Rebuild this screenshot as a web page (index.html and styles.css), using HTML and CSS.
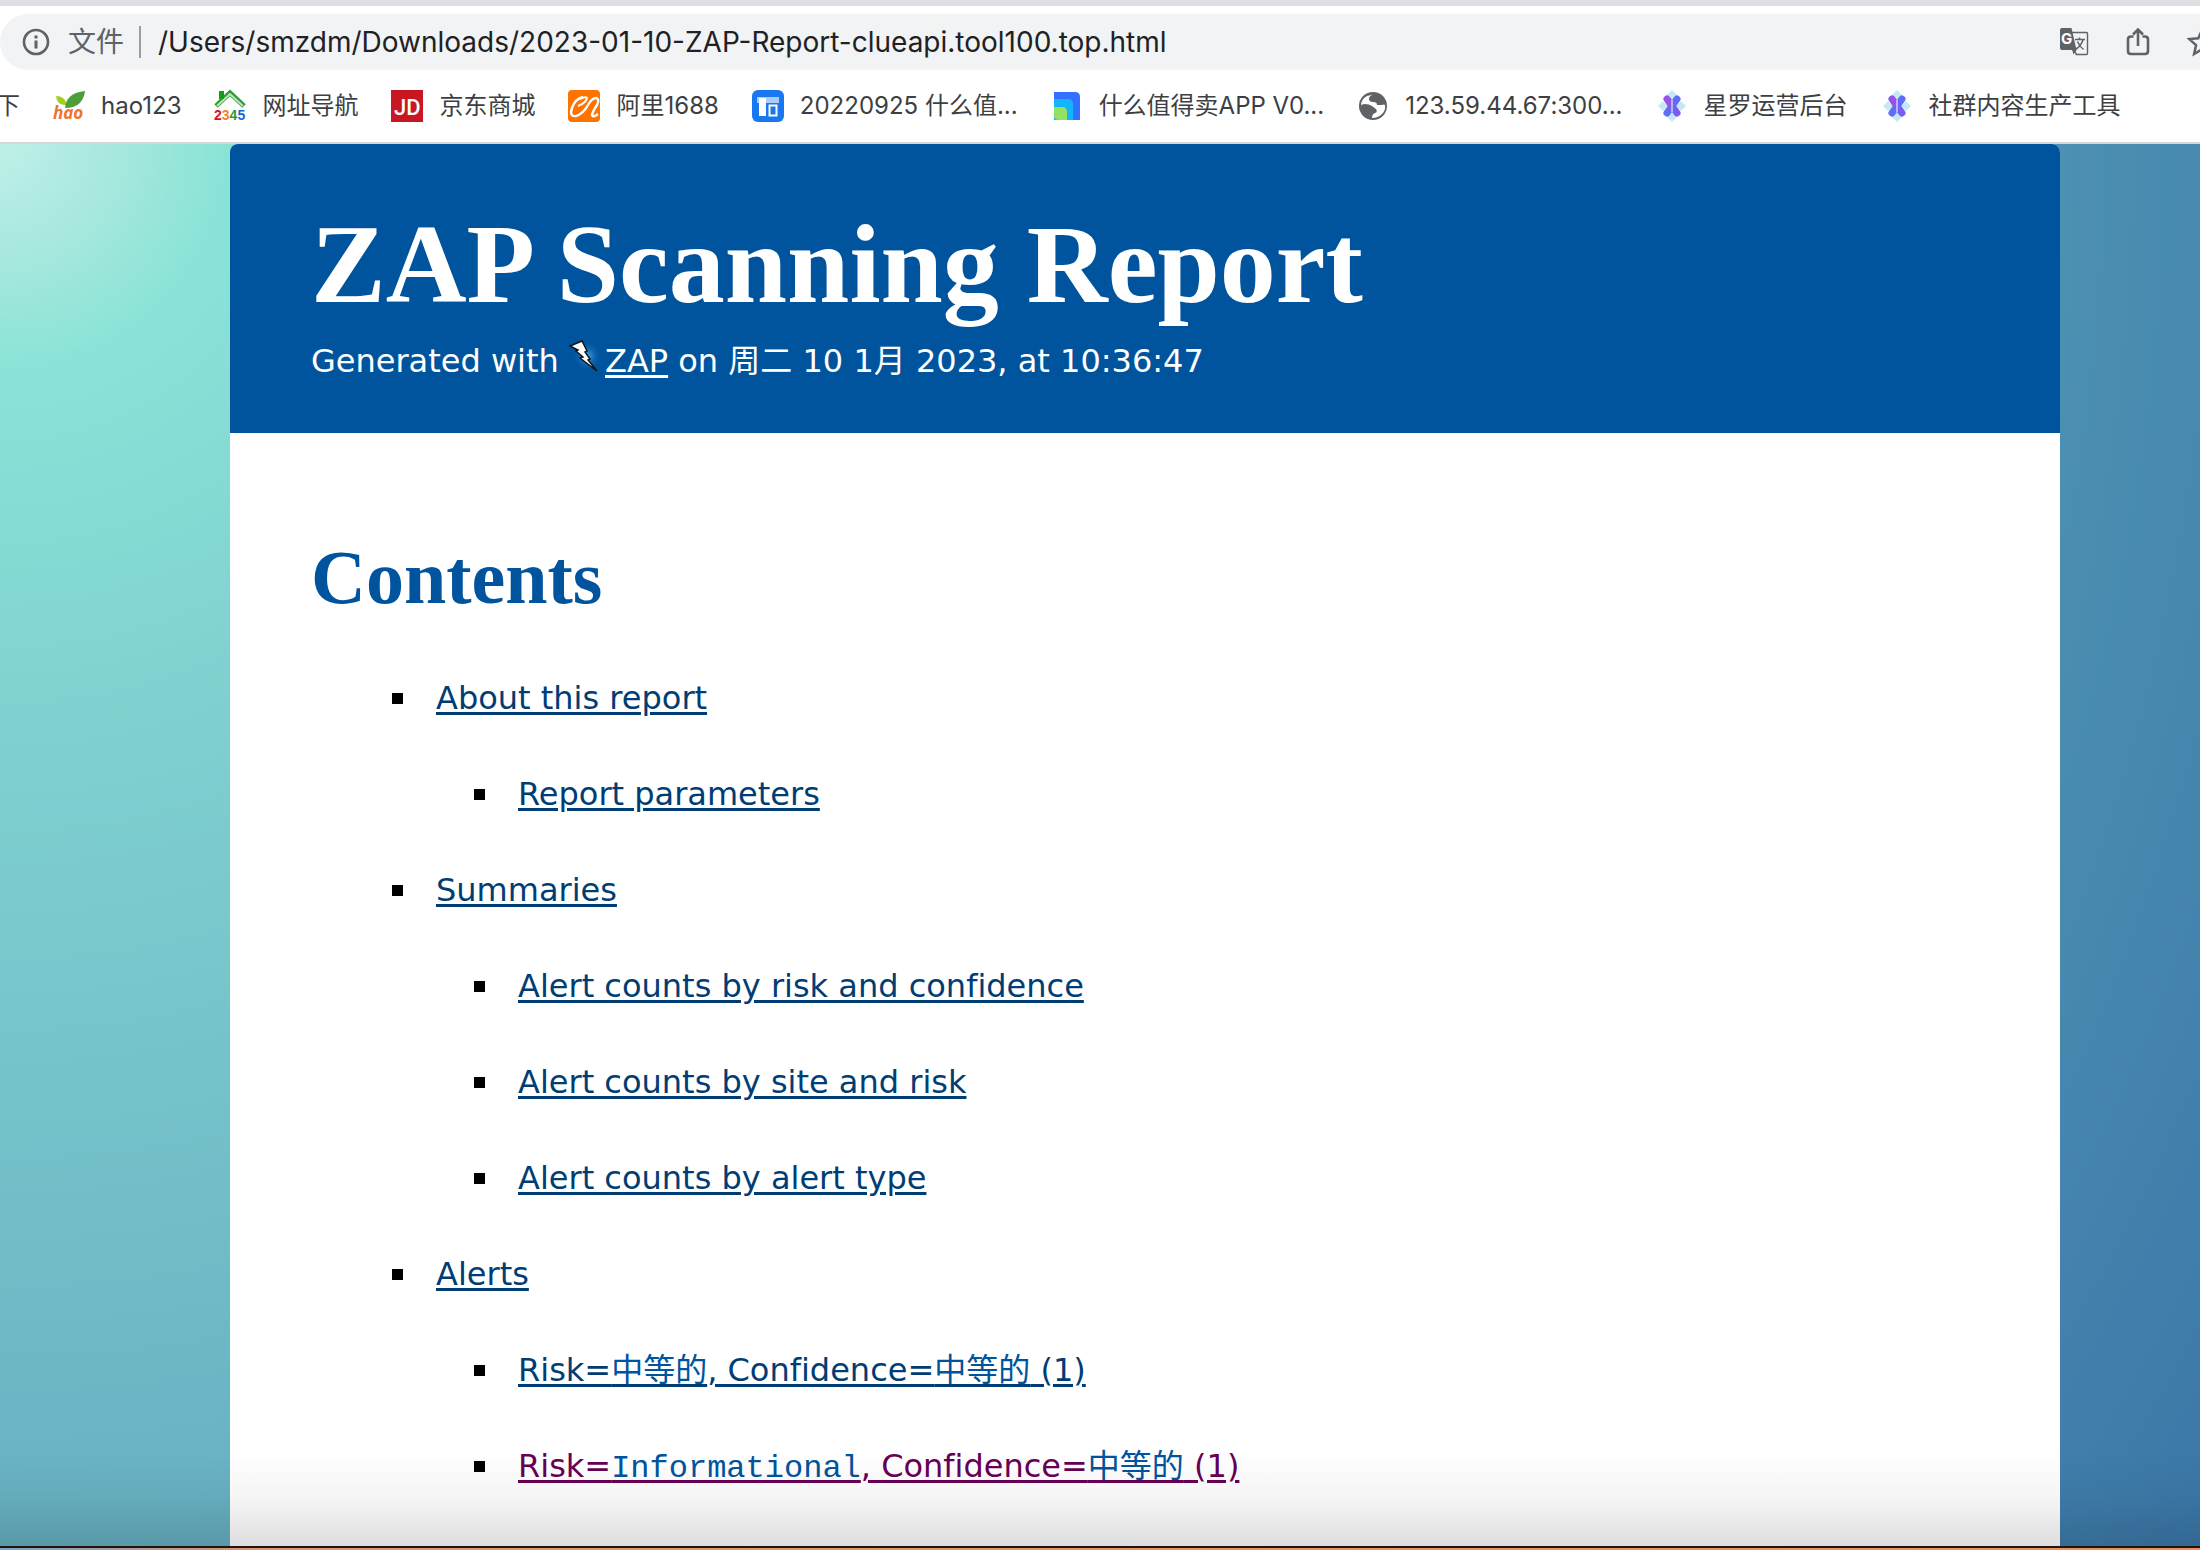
FILE: index.html
```html
<!DOCTYPE html>
<html lang="zh-CN">
<head>
<meta charset="utf-8">
<title>ZAP Scanning Report</title>
<link rel="stylesheet" href="styles.css">
</head>
<body>
<div class="window">
  <header class="chrome">
    <div class="omnibox">
      <svg class="info" viewBox="0 0 28 28" aria-hidden="true"><circle cx="14" cy="14" r="12" fill="none" stroke="#5f6368" stroke-width="2.6"/><path d="M14 12.5v8M14 7.5v3" stroke="#5f6368" stroke-width="3"/></svg>
      <label class="scheme" for="address">文件</label>
      <input class="address" id="address" type="text" value="/Users/smzdm/Downloads/2023-01-10-ZAP-Report-clueapi.tool100.top.html">
      <div class="actions">
        <button class="action" type="button" aria-label="翻译">
          <svg viewBox="0 0 30 30"><path d="M13 5.500h14.500q1 0 1 1v20q0 1-1 1H17.500L14 22" fill="none" stroke="#5f6368" stroke-width="1.400"/><path d="M3 1h9.500l5 22H3q-2 0-2-2V3q0-2 2-2z" fill="#5f6368"/><path d="M13 22.500h5l-3.500 5z" fill="#5f6368"/><text x="2" y="17" class="glyph-g">G</text><path d="M16 12.500h10M20.500 10.500v2M24 13q-2 6-7 9M18.500 14.500q2 5 6 8" fill="none" stroke="#5f6368" stroke-width="1.500"/></svg>
        </button>
        <button class="action" type="button" aria-label="分享">
          <svg viewBox="0 0 30 30"><path d="M10.500 9.500H8q-3 0-3 3V24q0 3 3 3h14q3 0 3-3V12.500q0-3-3-3h-2.500M15 19V3M10 7.500l5-5 5 5" fill="none" stroke="#5f6368" stroke-width="2.600"/></svg>
        </button>
        <button class="action" type="button" aria-label="收藏">
          <svg viewBox="0 0 30 30"><path d="M15 3l3.700 8.300 9 .8-6.800 6 2 8.900-7.900-4.700L7.100 27l2-8.900-6.800-6 9-.8z" fill="none" stroke="#5f6368" stroke-width="2.500"/></svg>
        </button>
      </div>
    </div>
    <nav class="bookmarks" aria-label="书签">
      <a class="bookmark" href="#">下</a>
      <a class="bookmark" href="#">
        <svg viewBox="0 0 32 32"><path d="M3 6q9 0 11 9Q4 16 3 6z" fill="#a4cf1c"/><path d="M12 18Q13 3 32 1 30 18 12 18z" fill="#4c9f38"/><text x="0" y="29" class="glyph-hao" fill="#ee7430">hao</text></svg>
        hao123</a>
      <a class="bookmark" href="#">
        <svg viewBox="0 0 32 32"><path d="M2 16L16 3l14 13" fill="none" stroke="#2f9a3a" stroke-width="5"/><path d="M3 16L16 4l13 12" fill="none" stroke="#bfe6bd" stroke-width="2"/><path d="M5 1h5v8H5z" fill="#159b17"/><text x="0" y="30" class="glyph-2345"><tspan fill="#d8121c">2</tspan><tspan fill="#f58320">3</tspan><tspan fill="#2b9b35">4</tspan><tspan fill="#1467cf">5</tspan></text></svg>
        网址导航</a>
      <a class="bookmark" href="#">
        <svg viewBox="0 0 32 32"><path d="M0 0h32v32H0z" fill="#c81623"/><text x="3" y="25" class="glyph-jd">JD</text></svg>
        京东商城</a>
      <a class="bookmark" href="#">
        <svg viewBox="0 0 32 32"><rect width="32" height="32" rx="4" fill="#ff7300"/><path d="M15 7Q7 9 4 18q-3 9 4 8 7-2 12-11 4-7 8-7 4 1 1 7-4 6-5 10 1 3 6-1" fill="none" stroke="#fff" stroke-width="2.400"/><path d="M12 9q6-3 7-1-1 5-9 8" fill="none" stroke="#fff" stroke-width="2"/></svg>
        阿里1688</a>
      <a class="bookmark" href="#">
        <svg viewBox="0 0 32 32"><rect width="32" height="32" rx="6" fill="#1977f2"/><path d="M5 7h22v6H5z" fill="#a9cdfb"/><path d="M7 8h7v18H7z" fill="#fff"/><rect x="17.500" y="15.500" width="7" height="10" fill="#1977f2" stroke="#fff" stroke-width="2"/></svg>
        20220925 什么值...</a>
      <a class="bookmark" href="#">
        <svg viewBox="0 0 32 32"><path d="M3 2h21q5 0 5 5v23H3z" fill="#3370ff"/><path d="M3 9h14q5 0 5 5v16H3z" fill="#14b4fa"/><path d="M3 17h8q5 0 5 5v8H8q-5 0-5-5z" fill="#93e264"/></svg>
        什么值得卖APP V0...</a>
      <a class="bookmark" href="#">
        <svg viewBox="0 0 32 32"><circle cx="16" cy="16" r="14" fill="#5f6368"/><path d="M18 4q-6 1-6 5 0 3 4 3 4 0 4 3h5q2-1 3 0 1 5-3 9-4 4-10 4 0-4 3-5 3-1 1-4l-4-3q-3-2-7-2-4 0-4 2Q4 9 10 6z" fill="#fff"/><path d="M19 5q-3 3 0 5 3 1 5 4h4Q27 7 19 5z" fill="#5f6368"/></svg>
        123.59.44.67:300...</a>
      <a class="bookmark" href="#">
        <svg viewBox="0 0 32 32"><path d="M16 0l5 5-5 5-5-5zM16 22l5 5-5 5-5-5zM7 11l5 5-5 5-5-5zM25 11l5 5-5 5-5-5z" fill="#c4e8f5"/><path d="M11 9l10 14" stroke="#7a5cf0" stroke-width="7" stroke-linecap="round"/><path d="M21 9L11 23" stroke="#5f6cf7" stroke-width="7" stroke-linecap="round"/><path d="M11 9l3 5" stroke="#9b50e8" stroke-width="6" stroke-linecap="round"/><path d="M16 10v12" stroke="#fff" stroke-width="1"/></svg>
        星罗运营后台</a>
      <a class="bookmark" href="#">
        <svg viewBox="0 0 32 32"><path d="M16 0l5 5-5 5-5-5zM16 22l5 5-5 5-5-5zM7 11l5 5-5 5-5-5zM25 11l5 5-5 5-5-5z" fill="#c4e8f5"/><path d="M11 9l10 14" stroke="#7a5cf0" stroke-width="7" stroke-linecap="round"/><path d="M21 9L11 23" stroke="#5f6cf7" stroke-width="7" stroke-linecap="round"/><path d="M11 9l3 5" stroke="#9b50e8" stroke-width="6" stroke-linecap="round"/><path d="M16 10v12" stroke="#fff" stroke-width="1"/></svg>
        社群内容生产工具</a>
    </nav>
  </header>
  <div class="page">
    <main class="report">
      <header class="banner">
        <h1>ZAP Scanning Report</h1>
        <p>Generated with <svg class="bolt" viewBox="0 0 32 32" aria-hidden="true"><defs><radialGradient id="glow"><stop offset="0" stop-color="#4da3f0"/><stop offset="1" stop-color="#00549e" stop-opacity="0"/></radialGradient></defs><circle cx="18" cy="16" r="15" fill="url(#glow)"/><path d="M1 6L13 1l5 10-2 1 5 7-2 1 9 11-17-13 3-1-7-6 2-1z" fill="#fff" stroke="#111" stroke-width="1.400"/></svg><a href="#">ZAP</a> on 周二 10 1月 2023, at 10:36:47</p>
      </header>
      <section class="contents">
        <h2>Contents</h2>
        <ul class="toc">
          <li><a href="#">About this report</a>
            <ul><li><a href="#">Report parameters</a></li></ul>
          </li>
          <li><a href="#">Summaries</a>
            <ul>
              <li><a href="#">Alert counts by risk and confidence</a></li>
              <li><a href="#">Alert counts by site and risk</a></li>
              <li><a href="#">Alert counts by alert type</a></li>
            </ul>
          </li>
          <li><a href="#">Alerts</a>
            <ul>
              <li><a href="#">Risk=<span class="level">中等的</span>, Confidence=<span class="level">中等的</span> (1)</a></li>
              <li><a class="seen" href="#">Risk=<code class="level">Informational</code>, Confidence=<span class="level">中等的</span> (1)</a></li>
            </ul>
          </li>
        </ul>
      </section>
    </main>
    <div class="shade"></div>
  </div>
  <div class="desktop-edge"></div>
</div>
</body>
</html>
```
FILE: styles.css
```css
* { box-sizing: border-box; }
body { margin: 0; }
.window {
  display: flex;
  flex-direction: column;
  min-height: 100vh;
  overflow: hidden;
  font-family: "DejaVu Sans", "Noto Sans CJK SC", sans-serif;
  font-variant-ligatures: none;
}

.chrome {
  border-top: 6px solid #dfdee4;
  border-bottom: 2px solid #d5d7da;
  padding-top: 8px;
  background: #fff;
  font-family: Inter, "Noto Sans CJK SC", sans-serif;
}
.omnibox {
  display: flex;
  align-items: center;
  height: 56px;
  padding-left: 22px;
  border-radius: 28px 0 0 28px;
  background: #f1f3f4;
}
.info { width: 28px; height: 28px; }
.scheme {
  margin-left: 18px;
  padding-right: 15px;
  border-right: 2px solid #9b9ea2;
  font-size: 28px;
  line-height: 32px;
  color: #5f6368;
}
.address {
  flex: 1;
  min-width: 0;
  margin-left: 17px;
  padding: 0;
  border: 0;
  outline: 0;
  background: none;
  font-family: inherit;
  font-size: 28px;
  color: #202124;
}
.actions { display: flex; gap: 34px; margin-right: -17px; }
.action { width: 30px; height: 30px; padding: 0; border: 0; background: none; }
.action svg { display: block; width: 30px; height: 30px; }
.glyph-g { font: bold 15px Inter, sans-serif; fill: #fff; }

.bookmarks {
  display: flex;
  align-items: center;
  gap: 33px;
  height: 72px;
  margin-left: -4px;
}
.bookmark {
  display: flex;
  align-items: center;
  gap: 16px;
  flex: none;
  font-size: 24px;
  line-height: 32px;
  color: #3c4043;
  text-decoration: none;
  white-space: nowrap;
}
.bookmark svg { width: 32px; height: 32px; overflow: visible; }
.glyph-hao { font: bold italic 17px "Open Sans", sans-serif; }
.glyph-2345 { font: bold 14px "Liberation Sans", sans-serif; }
.glyph-jd { font: 500 22px Roboto, sans-serif; fill: #fff; }

.page {
  position: relative;
  display: grid;
  flex: 1;
  padding: 0 140px 0 230px;
  background: radial-gradient(circle at 0 0, #bff0e8 0, #a8e8de 110px, #8be3d7 220px, #80d2d1 560px, #69b3c3 1340px, #4c90b2 2060px, #3b77a8 2600px);
}
.report { background: #fff; border-radius: 8px 8px 0 0; }
.banner {
  padding: 64px 81px 48px;
  border-radius: 8px 8px 0 0;
  background: #00549e;
  color: #fff;
}
.banner h1 {
  margin: 0 0 17px;
  font: bold 112px/112px "Liberation Serif", serif;
}
.banner p { margin: 0; font-size: 32px; line-height: 48px; }
.banner a { color: #fff; }
.bolt { width: 32px; height: 32px; margin-right: 4px; }

.contents { padding: 96px 81px 40px; }
.contents h2 {
  margin: 0 0 49px;
  font: bold 76px/96px "Liberation Serif", serif;
  color: #00549e;
}
.toc, .toc ul {
  display: grid;
  gap: 48px;
  margin: 0;
  padding: 0;
  list-style: none;
  font-size: 32px;
  line-height: 48px;
}
.toc { padding-left: 81px; }
.toc ul { padding: 48px 0 0 82px; }
.toc li::before {
  content: "";
  display: inline-block;
  width: 11px;
  height: 11px;
  margin-right: 33px;
  background: #000;
  vertical-align: 5px;
}
a { text-decoration-thickness: 3px; text-underline-offset: 3px; }
.toc a { color: #003d75; }
.toc .seen { color: #680055; }
.level { color: #00549e; }
code { font-family: "Liberation Mono", monospace; font-size: 32px; line-height: 48px; }

.shade {
  position: absolute;
  left: 0;
  right: 0;
  bottom: 0;
  height: 96px;
  background: linear-gradient(rgba(0, 0, 0, 0), rgba(0, 0, 0, .04) 50%, rgba(0, 0, 0, .13));
  pointer-events: none;
}
.desktop-edge {
  height: 4px;
  border-top: 2px solid #24130c;
  background: linear-gradient(90deg, #7ba4c6 0, #d99873 12%, #e8935f);
}
```
